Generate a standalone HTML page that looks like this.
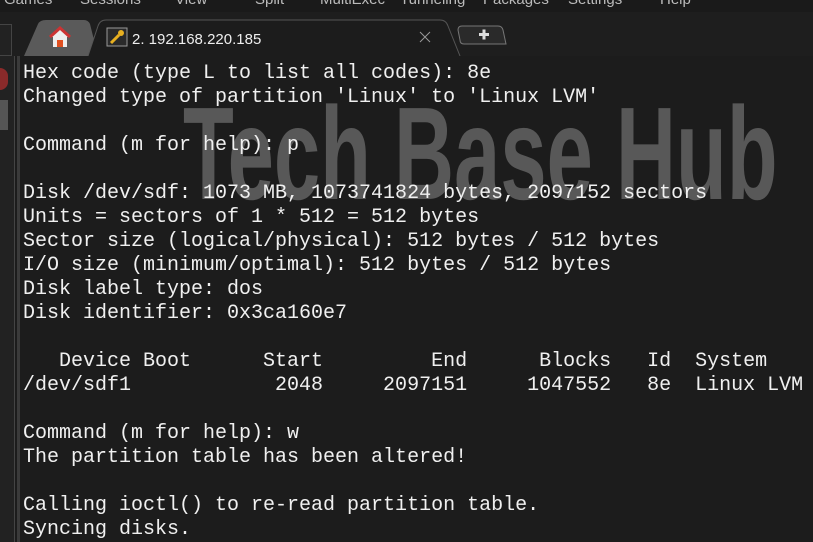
<!DOCTYPE html>
<html><head><meta charset="utf-8"><style>
html,body{margin:0;padding:0;width:813px;height:542px;overflow:hidden;background:#1c1c1c;}
.menu{position:absolute;left:0;top:0;width:813px;height:12px;background:#1a1a1a;overflow:hidden;}
.menu span{position:absolute;top:-9px;color:#bbb;font:15px "Liberation Sans",sans-serif;}
.tabbar{position:absolute;left:0;top:12px;width:813px;height:44px;background:#1e1e1e;}
.term{position:absolute;left:17px;top:56px;width:796px;height:486px;background:#1c1c1c;border-left:3px solid #3a3a3a;}
pre{position:absolute;left:23px;top:62px;margin:0;font:20px/24px "Liberation Mono",monospace;color:#f0f0f0;letter-spacing:0;}
.wm{position:absolute;left:183px;top:88px;font:bold 132px/1 "Liberation Sans",sans-serif;color:#585858;transform:scaleX(0.63);transform-origin:0 0;white-space:nowrap;}
</style></head><body>
<div class="menu">
<span style="left:4px">Games</span><span style="left:80px">Sessions</span><span style="left:175px">View</span><span style="left:255px">Split</span><span style="left:320px">MultiExec</span><span style="left:400px">Tunneling</span><span style="left:483px">Packages</span><span style="left:568px">Settings</span><span style="left:660px">Help</span>
</div>
<div class="tabbar">
<div style="position:absolute;left:0;top:12px;width:11px;height:30px;border:1px solid #444;border-left:none;background:#222"></div>
<svg width="813" height="44" style="position:absolute;left:0;top:0">
<path d="M24 44 L38 12 Q40 8 46 8 L84 8 Q88 8 90 12 L98 44 Z" fill="#5a5a5a"/>
<path d="M88 44 L98 14 Q100 8 106 8 L440 8 Q446 8 448 14 L460 44" fill="#1c1c1c" stroke="#555" stroke-width="1"/>
<path d="M458 18 Q458 14 462 14 L498 14 Q502 14 503 18 L506 32 L464 32 Q460 32 460 28 Z" fill="#2a2a2a" stroke="#777" stroke-width="1"/>
<rect x="479" y="21" width="10" height="3" fill="#ddd"/><rect x="482.5" y="17.5" width="3" height="10" fill="#ddd"/>
<path d="M50 25 L60 16 L70 25 L67 25 L67 35 L53 35 L53 25 Z" fill="#eee"/><path d="M50 25 L60 16 L70 25" fill="none" stroke="#c33" stroke-width="3"/><rect x="57" y="28" width="6" height="7" fill="#e05020"/>
<rect x="107" y="16" width="20" height="18" fill="#2a2a2a" stroke="#999"/><path d="M111 31 L119 23" stroke="#e8b020" stroke-width="3"/><circle cx="121" cy="21" r="3" fill="#e8b020"/>
<text x="132" y="32" font-family="Liberation Sans,sans-serif" font-size="15" fill="#eee">2. 192.168.220.185</text>
<path d="M420 20 L430 30 M430 20 L420 30" stroke="#999" stroke-width="1"/>
</svg>
</div>
<div class="term"></div>
<div style="position:absolute;left:0;top:56px;width:14px;height:486px;background:#222;border-right:1px solid #444"></div>
<div style="position:absolute;left:0;top:68px;width:8px;height:22px;border-radius:0 11px 11px 0;background:#8a2a2a"></div>
<div style="position:absolute;left:0;top:100px;width:8px;height:30px;background:#555"></div>
<div class="wm">Tech Base Hub</div>
<pre>Hex code (type L to list all codes): 8e
Changed type of partition 'Linux' to 'Linux LVM'

Command (m for help): p

Disk /dev/sdf: 1073 MB, 1073741824 bytes, 2097152 sectors
Units = sectors of 1 * 512 = 512 bytes
Sector size (logical/physical): 512 bytes / 512 bytes
I/O size (minimum/optimal): 512 bytes / 512 bytes
Disk label type: dos
Disk identifier: 0x3ca160e7

   Device Boot      Start         End      Blocks   Id  System
/dev/sdf1            2048     2097151     1047552   8e  Linux LVM

Command (m for help): w
The partition table has been altered!

Calling ioctl() to re-read partition table.
Syncing disks.</pre>
</body></html>
